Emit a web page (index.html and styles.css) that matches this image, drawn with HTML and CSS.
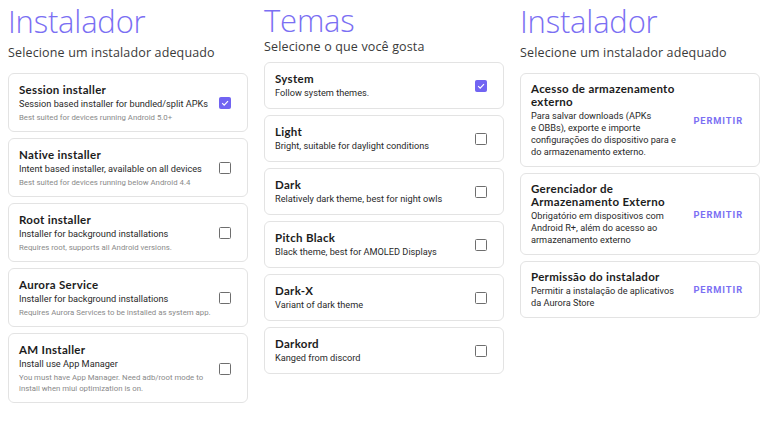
FILE: index.html
```html
<!DOCTYPE html>
<html>
<head>
<meta charset="utf-8">
<link rel="stylesheet" href="styles.css">
</head>
<body>
<div class="page">
  <section class="col">
    <h1 class="title">Instalador</h1>
    <p class="subtitle">Selecione um instalador adequado</p>
    <div class="list">
      <div class="card">
        <div class="text">
          <div class="name">Session installer</div>
          <div class="desc">Session based installer for bundled/split APKs</div>
          <div class="note">Best suited for devices running Android 5.0+</div>
        </div>
        <span class="check on"><svg viewBox="0 0 12 12"><path d="M2.6 6.2 L5 8.5 L9.6 3.8" fill="none" stroke="#fff" stroke-width="1.4"/></svg></span>
      </div>
      <div class="card">
        <div class="text">
          <div class="name">Native installer</div>
          <div class="desc">Intent based installer, available on all devices</div>
          <div class="note">Best suited for devices running below Android 4.4</div>
        </div>
        <span class="check"></span>
      </div>
      <div class="card">
        <div class="text">
          <div class="name">Root installer</div>
          <div class="desc">Installer for background installations</div>
          <div class="note">Requires root, supports all Android versions.</div>
        </div>
        <span class="check"></span>
      </div>
      <div class="card">
        <div class="text">
          <div class="name">Aurora Service</div>
          <div class="desc">Installer for background installations</div>
          <div class="note">Requires Aurora Services to be installed as system app.</div>
        </div>
        <span class="check"></span>
      </div>
      <div class="card">
        <div class="text">
          <div class="name">AM Installer</div>
          <div class="desc">Install use App Manager</div>
          <div class="note">You must have App Manager. Need adb/root mode to install when miui optimization is on.</div>
        </div>
        <span class="check"></span>
      </div>
    </div>
  </section>

  <section class="col col-themes">
    <h1 class="title">Temas</h1>
    <p class="subtitle">Selecione o que você gosta</p>
    <div class="list">
      <div class="card theme">
        <div class="text">
          <div class="name">System</div>
          <div class="desc">Follow system themes.</div>
        </div>
        <span class="check on"><svg viewBox="0 0 12 12"><path d="M2.6 6.2 L5 8.5 L9.6 3.8" fill="none" stroke="#fff" stroke-width="1.4"/></svg></span>
      </div>
      <div class="card theme">
        <div class="text">
          <div class="name">Light</div>
          <div class="desc">Bright, suitable for daylight conditions</div>
        </div>
        <span class="check"></span>
      </div>
      <div class="card theme">
        <div class="text">
          <div class="name">Dark</div>
          <div class="desc">Relatively dark theme, best for night owls</div>
        </div>
        <span class="check"></span>
      </div>
      <div class="card theme">
        <div class="text">
          <div class="name">Pitch Black</div>
          <div class="desc">Black theme, best for AMOLED Displays</div>
        </div>
        <span class="check"></span>
      </div>
      <div class="card theme">
        <div class="text">
          <div class="name">Dark-X</div>
          <div class="desc">Variant of dark theme</div>
        </div>
        <span class="check"></span>
      </div>
      <div class="card theme">
        <div class="text">
          <div class="name">Darkord</div>
          <div class="desc">Kanged from discord</div>
        </div>
        <span class="check"></span>
      </div>
    </div>
  </section>

  <section class="col">
    <h1 class="title">Instalador</h1>
    <p class="subtitle">Selecione um instalador adequado</p>
    <div class="list">
      <div class="card perm">
        <div class="text">
          <div class="name">Acesso de armazenamento externo</div>
          <div class="desc">Para salvar downloads (APKs<br>e OBBs), exporte e importe configurações do dispositivo para e do armazenamento externo.</div>
        </div>
        <span class="action">PERMITIR</span>
      </div>
      <div class="card perm">
        <div class="text">
          <div class="name">Gerenciador de Armazenamento Externo</div>
          <div class="desc">Obrigatório em dispositivos com Android R+, além do acesso ao armazenamento externo</div>
        </div>
        <span class="action">PERMITIR</span>
      </div>
      <div class="card perm">
        <div class="text">
          <div class="name">Permissão do instalador</div>
          <div class="desc">Permitir a instalação de aplicativos da Aurora Store</div>
        </div>
        <span class="action">PERMITIR</span>
      </div>
    </div>
  </section>
</div>
</body>
</html>
```

FILE: styles.css
```css
html, body {
  margin: 0;
  padding: 0;
  background: #ffffff;
}

.page {
  display: grid;
  grid-template-columns: 240px 240px 240px;
  column-gap: 16px;
  padding: 0 8px;
  align-items: start;
}

.col {
  display: flex;
  flex-direction: column;
}

.title {
  margin: 0;
  font-family: "Open Sans", "Noto Sans", sans-serif;
  font-weight: 300;
  font-size: 31px;
  line-height: 42px;
  color: #7b6ff3;
  letter-spacing: -0.2px;
}

.subtitle {
  margin: 0;
  padding-top: 2px;
  font-family: "Open Sans", "Noto Sans", sans-serif;
  font-size: 12.5px;
  line-height: 18px;
  color: #3a3a3a;
  letter-spacing: 0.15px;
}

.col-themes .title {
  line-height: 40px;
}

.col-themes .subtitle {
  padding-top: 0;
  line-height: 14px;
}

.list {
  display: flex;
  flex-direction: column;
  gap: 6px;
  margin-top: 11px;
}

.col-themes .list {
  margin-top: 8px;
}

.card {
  display: flex;
  align-items: center;
  gap: 6px;
  border: 1px solid #e3e3e3;
  border-radius: 6px;
  padding: 9px 16px 8px 10px;
  min-height: 27px;
}

.text {
  flex: 1;
  min-width: 0;
}

.name {
  font-family: "Lato", "Noto Sans", sans-serif;
  font-weight: 700;
  font-size: 11.5px;
  line-height: 14px;
  color: #1c1c1c;
  letter-spacing: 0.3px;
}

.desc {
  font-family: Roboto, "Noto Sans", sans-serif;
  font-size: 9.2px;
  line-height: 12px;
  color: #2a2a2a;
  margin-top: 1px;
}

.note {
  font-family: Roboto, "Noto Sans", sans-serif;
  font-size: 7.8px;
  line-height: 11px;
  color: #8a8a8a;
  margin-top: 2px;
}

.check {
  width: 10px;
  height: 10px;
  border: 1.5px solid #6e6e6e;
  border-radius: 1.5px;
  flex: none;
  display: flex;
  align-items: center;
  justify-content: center;
}

.check.on {
  background: #7164f2;
  border-color: #7164f2;
}

.check svg {
  width: 12px;
  height: 12px;
}

.card.theme {
  padding: 9px 16px 9px 10px;
}

.card.perm {
  padding: 8px 16px 8px 10px;
  gap: 12px;
}

.perm .name {
  line-height: 13px;
}

.perm .desc {
  margin-top: 2px;
}

.action {
  flex: none;
  font-family: Roboto, "Noto Sans", sans-serif;
  font-weight: 700;
  font-size: 9.3px;
  letter-spacing: 0.9px;
  color: #7b6ff3;
}
```
